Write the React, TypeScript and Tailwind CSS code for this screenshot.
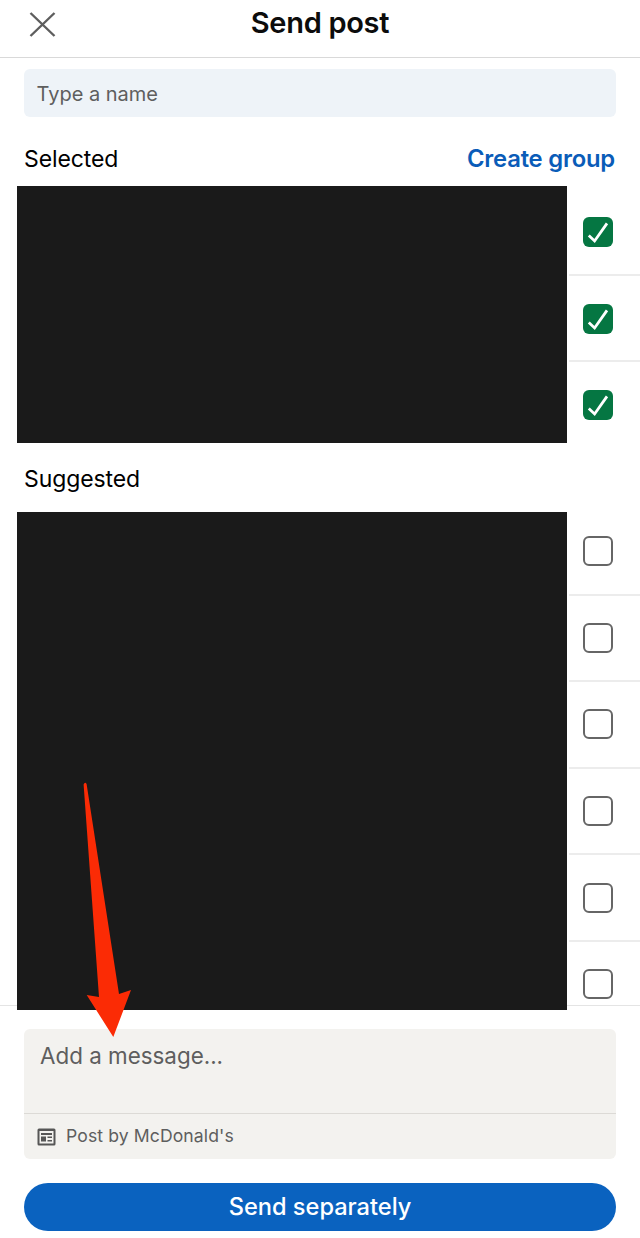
import React from "react";

function Box({ checked }: { checked?: boolean }) {
  if (checked) {
    return (
      <div className="flex h-[30px] w-[30px] shrink-0 items-center justify-center rounded-[6px] bg-[#057642]">
        <svg width="30" height="30" viewBox="0 0 30 30" fill="none">
          <path d="M5.8 18.6 L11.6 24 L24 6.4" stroke="#fff" strokeWidth="2.8" />
        </svg>
      </div>
    );
  }
  return <div className="h-[30px] w-[30px] shrink-0 rounded-[6px] border-2 border-[#666666] bg-white" />;
}

function Row({ checked, className }: { checked?: boolean; className?: string }) {
  return (
    <div className={`flex h-[86.6px] shrink-0 items-center border-b-2 border-[#ececec] pl-[14px] ${checked ? "pt-[2px]" : ""} ${className ?? ""}`}>
      <Box checked={checked} />
    </div>
  );
}

export default function App() {
  return (
    <div className="relative flex h-[1238px] w-[640px] flex-col overflow-hidden bg-white font-['Inter','Liberation_Sans',sans-serif] text-black">
      <header className="relative flex h-[58px] shrink-0 items-center justify-center border-b border-[#d9d9d9]">
        <svg className="absolute left-[29px] top-[12px]" width="27" height="25" viewBox="0 0 27 25" fill="none">
          <path d="M1.5 1 L25.5 24 M25.5 1 L1.5 24" stroke="#5e5e5e" strokeWidth="2.4" />
        </svg>
        <h1 className="mb-[11px] text-[29px] font-semibold leading-[34px] tracking-[-0.3px] text-[#0c0c0c]">Send post</h1>
      </header>

      <div className="mx-[24px] mt-[11px] flex h-[48px] shrink-0 items-center rounded-[6px] bg-[#eef3f8] pl-[12.5px] pt-[2px] text-[20px] text-[#5e5e5e]">
        Type a name
      </div>

      <div className="mb-[6px] ml-[24px] mr-[25px] mt-[21px] flex h-[42px] shrink-0 items-center justify-between">
        <span className="text-[23px] tracking-[-0.1px]">Selected</span>
        <span className="text-[23.8px] font-semibold tracking-[-0.2px] text-[#0a5cb8]">Create group</span>
      </div>

      <section className="flex h-[257px] shrink-0">
        <div className="ml-[17px] w-[550px] shrink-0 bg-[#1a1a1a]" />
        <div className="ml-[2px] flex-1 overflow-hidden">
          <Row checked className="mt-[3px]" />
          <Row checked />
          <Row checked />
        </div>
      </section>

      <div className="flex h-[69px] shrink-0 items-center pl-[24px] pt-[3px] text-[23px] tracking-[-0.1px]">Suggested</div>

      <section className="flex h-[493px] shrink-0">
        <div className="relative z-10 ml-[17px] h-[498px] w-[550px] shrink-0 bg-[#1a1a1a]" />
        <div className="ml-[2px] flex-1 overflow-hidden">
          <Row className="-mt-[3px]" />
          <Row />
          <Row />
          <Row />
          <Row />
          <Row />
        </div>
      </section>

      <footer className="flex-1 border-t border-[#e4e4e4] px-[24px] pt-[23px]">
        <div className="h-[130px] rounded-[6px] bg-[#f3f2ef]">
          <div className="h-[84px] pl-[16px] pt-[10px] text-[22.4px] leading-[34px] text-[#5e5e5e]">Add a message...</div>
          <div className="flex h-[46px] items-center border-t border-[#dcdad6] pl-[13px] text-[17.6px] text-[#5e5e5e]">
            <svg width="19" height="18" viewBox="0 0 19 18" fill="none" className="mr-[10px]">
              <path fillRule="evenodd" clipRule="evenodd" fill="#565656" d="M2 0.5 H17 A1.5 1.5 0 0 1 18.5 2 V16 A1.5 1.5 0 0 1 17 17.5 H2 A1.5 1.5 0 0 1 0.5 16 V2 A1.5 1.5 0 0 1 2 0.5 Z M2.5 3 V15.5 H16.5 V3 Z" />
              <path fill="#565656" d="M4 5 H15 V7 H4 Z M4 8.5 H9 V13.5 H4 Z M10.5 8.5 H15 V10 H10.5 Z M10.5 12 H15 V13.5 H10.5 Z" />
            </svg>
            <span className="tracking-[0.1px]">Post by McDonald's</span>
          </div>
        </div>
        <button className="mt-[24px] flex h-[48px] w-full items-center justify-center rounded-full bg-[#0a62bf] text-[23.6px] font-medium text-white">
          Send separately
        </button>
      </footer>

      <svg className="absolute left-[80px] top-[778px] z-20" width="56" height="264" viewBox="80 778 56 264">
        <path
          fill="#fb2b05"
          d="M83.6 784.5 Q85 781.5 86.6 784 L119 994 L131 990 L113.3 1037 L86.7 995 L99 997 Z"
        />
      </svg>
    </div>
  );
}
